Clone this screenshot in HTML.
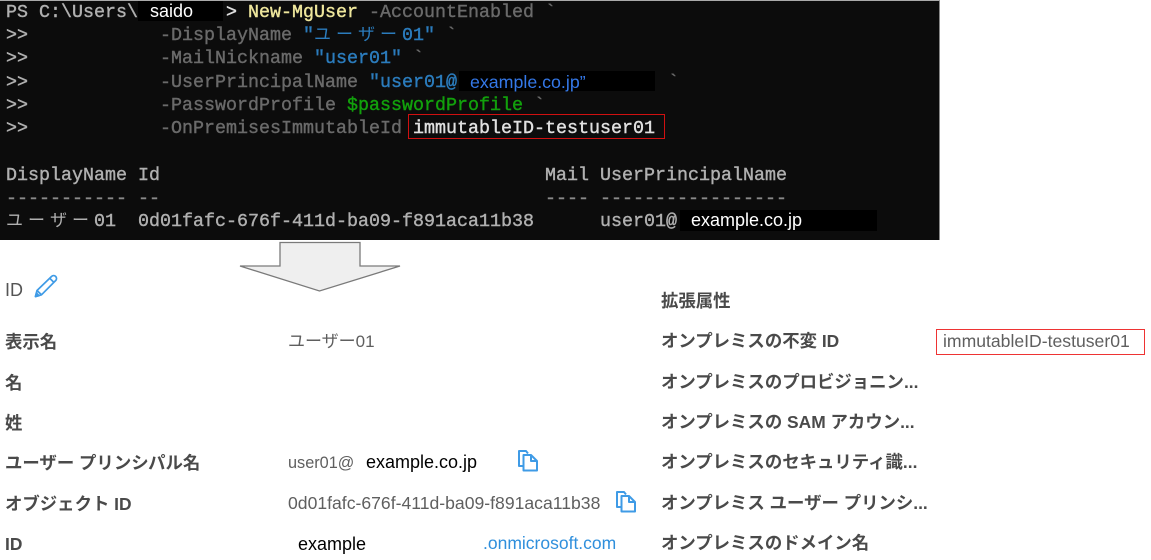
<!DOCTYPE html>
<html lang="ja">
<head>
<meta charset="utf-8">
<title>New-MgUser</title>
<style>
html,body{margin:0;padding:0;background:#fff;}
body{position:relative;width:1151px;height:560px;overflow:hidden;font-family:"Liberation Sans","Noto Sans CJK JP",sans-serif;filter:blur(.3px);}
#term{position:absolute;left:0;top:0;width:940px;height:240px;background:#0c0c0c;border-top:1px solid #aaa;box-sizing:border-box;border-right:1px solid #888;}
.t{position:absolute;margin-top:1px;white-space:pre;font:400 18.33px/23px "Liberation Mono","Noto Sans CJK JP",monospace;color:#b0b0b0;-webkit-text-stroke:.4px currentColor;}
.g{color:#6a6a6a}.y{color:#eee69c}.b{color:#2b7cbd}.gr{color:#12a00c}.w{color:#e0e0e0}
.k{display:inline-block;width:22px;font-size:17px;font-weight:400;-webkit-text-stroke:0;}
.blk{position:absolute;background:#000;}
.a{position:absolute;white-space:pre;font-family:"Liberation Sans",Arial,sans-serif;}
.l{position:absolute;white-space:pre;left:5px;font-size:17.4px;line-height:22px;font-weight:700;color:#4a4a4a;}
.r{position:absolute;white-space:pre;left:661px;font-size:17.4px;line-height:22px;font-weight:700;color:#4a4a4a;}
.v{position:absolute;white-space:pre;font-size:16px;line-height:22px;color:#5f5f5f;}
</style>
</head>
<body>
<div id="term"></div>

<div class="t" style="left:6px;top:0px">PS C:\Users\</div>
<div class="blk" style="left:138px;top:1px;width:85px;height:20px"></div>
<div class="a" style="left:150px;top:2px;font-size:18px;line-height:18px;color:#fff">saido</div>
<div class="t" style="left:226px;top:0px"><span class="w">&gt;</span> <span class="y">New-MgUser</span> <span class="g">-AccountEnabled `</span></div>

<div class="t" style="left:6px;top:23px">&gt;&gt;</div>
<div class="t g" style="left:160px;top:23px">-DisplayName <span class="b">"<span class="k">ユ</span><span class="k">ー</span><span class="k">ザ</span><span class="k">ー</span>01"</span> `</div>

<div class="t" style="left:6px;top:46px">&gt;&gt;</div>
<div class="t g" style="left:160px;top:46px">-MailNickname <span class="b">"user01"</span> `</div>

<div class="t" style="left:6px;top:70px">&gt;&gt;</div>
<div class="t g" style="left:160px;top:70px">-UserPrincipalName <span class="b">"user01@</span></div>
<div class="blk" style="left:459px;top:71px;width:196px;height:20px"></div>
<div class="a" style="left:470px;top:73px;font-size:17.800px;line-height:18px;color:#3478e8">example.co.jp”</div>
<div class="t g" style="left:668px;top:70px">`</div>

<div class="t" style="left:6px;top:93px">&gt;&gt;</div>
<div class="t g" style="left:160px;top:93px">-PasswordProfile <span class="gr">$passwordProfile</span> `</div>

<div class="t" style="left:6px;top:116px">&gt;&gt;</div>
<div class="t g" style="left:160px;top:116px">-OnPremisesImmutableId</div>
<div class="t w" style="left:413px;top:116px">immutableID-testuser01</div>
<div style="position:absolute;left:408px;top:114px;width:257px;height:25px;border:1.5px solid #d01010;box-sizing:border-box"></div>

<div class="t" style="left:6px;top:163px">DisplayName Id</div>
<div class="t" style="left:545px;top:163px">Mail UserPrincipalName</div>
<div class="t" style="left:6px;top:186px;color:#8a8a8a">----------- --</div>
<div class="t" style="left:545px;top:186px;color:#8a8a8a">---- -----------------</div>
<div class="t" style="left:6px;top:209px"><span class="k">ユ</span><span class="k">ー</span><span class="k">ザ</span><span class="k">ー</span>01  0d01fafc-676f-411d-ba09-f891aca11b38</div>
<div class="t" style="left:600px;top:209px">user01@</div>
<div class="blk" style="left:680px;top:210px;width:197px;height:21px"></div>
<div class="a" style="left:691px;top:211px;font-size:18px;line-height:18px;color:#fff">example.co.jp</div>

<svg style="position:absolute;left:238px;top:241px" width="165" height="54" viewBox="0 0 165 54">
<path d="M42 1.500H122V25H162L81.500 50L2 25H42Z" fill="#efefef" stroke="#7a7a7a" stroke-width="1.300" stroke-linejoin="miter"/>
</svg>

<div class="v" style="left:5px;top:279px;font-size:18px;color:#555">ID</div>
<svg style="position:absolute;left:33px;top:274px" width="26" height="25" viewBox="0 0 26 25" fill="none" stroke="#3f9be6" stroke-width="1.700" stroke-linejoin="round">
<path d="M2.500 22.500L4 16.500L18.500 2.500C19.800 1.300 21.500 1.300 22.700 2.500C23.800 3.700 23.800 5.300 22.700 6.500L8.500 20.800Z"/>
<path d="M4 16.500L8.500 20.800M17 4.500L21 8.500"/>
<path d="M2.500 22.500L3.400 19L6 21.700Z" fill="#3f9be6"/>
</svg>

<div class="l" style="top:331px">表示名</div>
<div class="l" style="top:372px">名</div>
<div class="l" style="top:412px">姓</div>
<div class="l" style="top:452px">ユーザー プリンシパル名</div>
<div class="l" style="top:493px">オブジェクト ID</div>
<div class="l" style="top:533px">ID</div>

<div class="v" style="left:288px;top:331px;font-size:17px">ユーザー01</div>
<div class="v" style="left:288px;top:452px;font-size:16.300px">user01@</div>
<div class="a" style="left:366px;top:451px;font-size:18px;line-height:22px;color:#000">example.co.jp</div>
<div class="v" style="left:288px;top:492px;font-size:17.600px">0d01fafc-676f-411d-ba09-f891aca11b38</div>
<div class="a" style="left:298px;top:533px;font-size:18px;line-height:22px;color:#000">example</div>
<div class="a" style="left:483px;top:532px;font-size:17.500px;line-height:22px;color:#2f8fdc">.onmicrosoft.com</div>

<svg style="position:absolute;left:517px;top:449px" width="22" height="23" viewBox="0 0 22 23" fill="none" stroke="#3f9be6" stroke-width="2" stroke-linejoin="round">
<path d="M6 17H2V2H9L11 4.500"/>
<path d="M6.500 6H14L20 12V21.500H6.500Z"/>
<path d="M14 6V12H20"/>
</svg>
<svg style="position:absolute;left:615px;top:490px" width="22" height="23" viewBox="0 0 22 23" fill="none" stroke="#3f9be6" stroke-width="2" stroke-linejoin="round">
<path d="M6 17H2V2H9L11 4.500"/>
<path d="M6.500 6H14L20 12V21.500H6.500Z"/>
<path d="M14 6V12H20"/>
</svg>

<div class="r" style="top:290px">拡張属性</div>
<div class="r" style="top:330px">オンプレミスの不変 ID</div>
<div class="r" style="top:371px">オンプレミスのプロビジョニン...</div>
<div class="r" style="top:411px">オンプレミスの SAM アカウン...</div>
<div class="r" style="top:451px">オンプレミスのセキュリティ識...</div>
<div class="r" style="top:492px">オンプレミス ユーザー プリンシ...</div>
<div class="r" style="top:532px">オンプレミスのドメイン名</div>

<div style="position:absolute;left:936px;top:329px;width:209px;height:26px;border:1.500px solid #ee3333;box-sizing:border-box"></div>
<div class="v" style="left:943px;top:330px;font-size:17.600px">immutableID-testuser01</div>
</body>
</html>
